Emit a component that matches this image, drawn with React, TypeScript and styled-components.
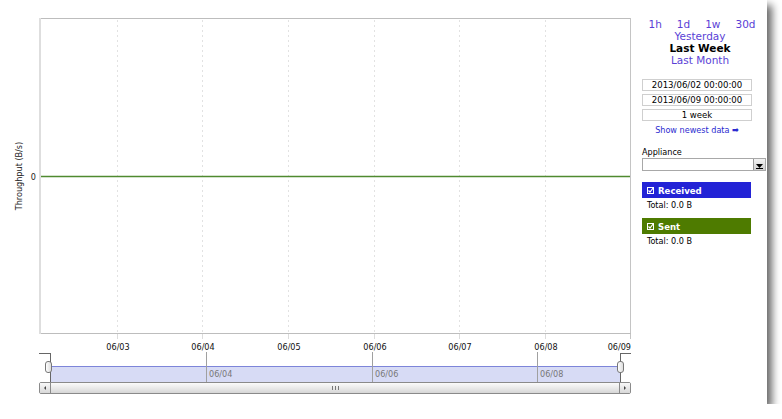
import React from 'react';
import styled, { createGlobalStyle } from 'styled-components';

const GlobalStyle = createGlobalStyle`
	html, body {
		margin: 0;
		padding: 0;
		background: #ffffff;
	}
	body {
		font-family: 'DejaVu Sans Condensed', 'DejaVu Sans', Verdana, sans-serif;
		color: #000;
	}
`;

const Frame = styled.div`
	display: flex;
	width: 767px;
	height: 404px;
	background: #fff;
	box-shadow: 5px 5px 8px rgba(0, 0, 0, 0.6);
`;

const ChartColumn = styled.div`
	display: flex;
	flex-direction: column;
	width: 636px;
`;

const PlotSvg = styled.svg`
	display: block;
	font-family: 'DejaVu Sans Condensed', 'DejaVu Sans', sans-serif;
`;

const Navigator = styled.div`
	display: flex;
	margin: 0 0 0 39px;
	width: 592px;
	height: 30px;
	position: relative;
`;

const Mask = styled.div<{ $side: 'left' | 'right' }>`
	width: ${(p) => (p.$side === 'left' ? 12 : 11)}px;
	box-sizing: border-box;
	margin-top: 1px;
	border-top: 1px solid #666;
	${(p) => (p.$side === 'left' ? 'border-right: 1px solid #666;' : 'border-left: 1px solid #666;')}
`;

const Range = styled.div`
	flex: 1;
	display: flex;
	flex-direction: column;
	justify-content: flex-end;
	position: relative;
`;

const Band = styled.div`
	height: 16px;
	box-sizing: border-box;
	background: #d7dbf5;
	border-top: 1px solid #7d85d9;
`;

const NavTick = styled.div`
	position: absolute;
	top: 0;
	bottom: 0;
	border-left: 1px solid #a0a0a0;
	font-size: 9px;
	color: #777;
	padding: 17px 0 0 2px;
	box-sizing: border-box;
`;

const Handle = styled.div<{ $x: number }>`
	position: absolute;
	left: ${(p) => p.$x}px;
	top: 9px;
	width: 5px;
	height: 10px;
	border: 1px solid #777;
	border-radius: 3px;
	background: linear-gradient(90deg, #fff, #ddd);
`;

const Scrollbar = styled.div`
	display: flex;
	margin-left: 39px;
	width: 592px;
	height: 12px;
	box-sizing: border-box;
	border: 1px solid #8a8a8a;
	border-radius: 2px;
	background: #eee;
`;

const ScrollButton = styled.div`
	width: 11px;
	display: flex;
	align-items: center;
	justify-content: center;
	background: linear-gradient(#f8f8f8, #d8d8d8);
	box-sizing: border-box;
	&:first-child {
		border-right: 1px solid #8a8a8a;
	}
	&:last-child {
		border-left: 1px solid #8a8a8a;
	}
`;

const Track = styled.div`
	flex: 1;
	display: flex;
	align-items: center;
	justify-content: center;
	background: linear-gradient(#fbfbfb, #e6e6e6 60%, #d6d6d6);
`;

const Grip = styled.div`
	width: 5px;
	height: 4px;
	border-left: 1px solid #777;
	border-right: 1px solid #777;
	position: relative;
	&::after {
		content: '';
		position: absolute;
		left: 2px;
		top: 0;
		height: 4px;
		border-left: 1px solid #777;
	}
`;

const Arrow = styled.div<{ $dir: 'left' | 'right' }>`
	width: 0;
	height: 0;
	border-top: 2px solid transparent;
	border-bottom: 2px solid transparent;
	${(p) => (p.$dir === 'left' ? 'border-right: 2px solid #444;' : 'border-left: 2px solid #444;')}
`;

const Side = styled.div`
	display: flex;
	flex-direction: column;
	width: 124px;
	padding: 18px 0 0 6px;
`;

const Presets = styled.div`
	width: 116px;
	display: flex;
	flex-direction: column;
	align-items: center;
	font-family: 'DejaVu Sans', Verdana, sans-serif;
	font-size: 10.5px;
	line-height: 12px;
	color: #5a3fd6;
`;

const PresetRow = styled.div`
	display: flex;
	gap: 15px;
	margin-left: 4px;
`;

const Preset = styled.span<{ $active?: boolean }>`
	color: ${(p) => (p.$active ? '#000' : '#5a3fd6')};
	font-weight: ${(p) => (p.$active ? 'bold' : 'normal')};
`;

const DateBox = styled.div<{ $first?: boolean }>`
	width: 110px;
	height: 12px;
	box-sizing: border-box;
	border: 1px solid #cfcfcf;
	font-size: 9.5px;
	line-height: 10px;
	text-align: center;
	margin-top: ${(p) => (p.$first ? 13 : 3)}px;
`;

const NewestLink = styled.div`
	width: 110px;
	text-align: center;
	margin-top: 3px;
	font-size: 9px;
	line-height: 12px;
	color: #2b2bd0;
`;

const FieldLabel = styled.div`
	margin-top: 11px;
	font-size: 9px;
	line-height: 10px;
`;

const Select = styled.div`
	display: flex;
	justify-content: flex-end;
	width: 124px;
	height: 13px;
	box-sizing: border-box;
	border: 1px solid #a8a8a8;
	margin-top: 1px;
`;

const SelectButton = styled.div`
	width: 12px;
	display: flex;
	align-items: flex-end;
	justify-content: center;
	padding-bottom: 1px;
	box-sizing: border-box;
	border-left: 1px solid #999;
	background: linear-gradient(#f4f4f4, #cfcfcf);
`;

const SeriesBar = styled.div<{ $color: string; $gap: number }>`
	display: flex;
	align-items: center;
	gap: 4px;
	width: 109px;
	height: 16px;
	box-sizing: border-box;
	padding-left: 5px;
	background: ${(p) => p.$color};
	color: #fff;
	font-size: 9.5px;
	font-weight: bold;
	margin-top: ${(p) => p.$gap}px;
`;

const Total = styled.div`
	padding-left: 5px;
	margin-top: 2px;
	font-size: 9px;
	line-height: 11px;
`;

const ticks = [
	{ x: 117, label: '06/03' },
	{ x: 202, label: '06/04' },
	{ x: 288, label: '06/05' },
	{ x: 374, label: '06/06' },
	{ x: 459, label: '06/07' },
	{ x: 545, label: '06/08' },
];

const navTicks = [
	{ x: 155, label: '06/04' },
	{ x: 321, label: '06/06' },
	{ x: 486, label: '06/08' },
];

const CheckIcon = () => (
	<svg width='7' height='7' viewBox='0 0 7 7'>
		<rect x='0.5' y='0.5' width='6' height='6' fill='none' stroke='#fff' strokeWidth='1' />
		<path d='M1.5 3.5 L3 5 L6.5 0.5' fill='none' stroke='#fff' strokeWidth='1.2' />
	</svg>
);

const Plot = () => (
	<PlotSvg width='636' height='352' viewBox='0 0 636 352'>
		{ticks.map((t) => (
			<g key={t.x}>
				<line x1={t.x + 0.5} y1='20' x2={t.x + 0.5} y2='333' stroke='#e2e2e2' strokeDasharray='2 3' />
				<line x1={t.x + 0.5} y1='334' x2={t.x + 0.5} y2='339' stroke='#dcdcdc' />
				<text x={t.x + 1} y='350' fontSize='9' textAnchor='middle' fill='#111'>
					{t.label}
				</text>
			</g>
		))}
		<text x='631' y='350' fontSize='9' textAnchor='end' fill='#111'>
			06/09
		</text>
		<line x1='40' y1='18.5' x2='631' y2='18.5' stroke='#bdbdbd' />
		<line x1='630.5' y1='18' x2='630.5' y2='339' stroke='#c4c4c4' />
		<line x1='40' y1='333.5' x2='631' y2='333.5' stroke='#bdbdbd' />
		<line x1='40' y1='18' x2='40' y2='334' stroke='#dedede' strokeWidth='2' />
		<line x1='41' y1='176.5' x2='630' y2='176.5' stroke='#4f8a30' strokeWidth='1.6' />
		<text x='36' y='180' fontSize='9' textAnchor='end' fill='#222'>
			0
		</text>
		<text x='22' y='176' fontSize='9' textAnchor='middle' fill='#222' transform='rotate(-90 22 176)'>
			Throughput (B/s)
		</text>
	</PlotSvg>
);

export default function App() {
	return (
		<>
			<GlobalStyle />
			<Frame>
				<ChartColumn>
					<Plot />
					<Navigator>
						<Mask $side='left' />
						<Range>
							<Band />
							{navTicks.map((t) => (
								<NavTick key={t.x} style={{ left: t.x }}>
									{t.label}
								</NavTick>
							))}
						</Range>
						<Mask $side='right' />
						<Handle $x={6} />
						<Handle $x={578} />
					</Navigator>
					<Scrollbar>
						<ScrollButton>
							<Arrow $dir='left' />
						</ScrollButton>
						<Track>
							<Grip />
						</Track>
						<ScrollButton>
							<Arrow $dir='right' />
						</ScrollButton>
					</Scrollbar>
				</ChartColumn>
				<Side>
					<Presets>
						<PresetRow>
							<Preset>1h</Preset>
							<Preset>1d</Preset>
							<Preset>1w</Preset>
							<Preset>30d</Preset>
						</PresetRow>
						<Preset>Yesterday</Preset>
						<Preset $active>Last Week</Preset>
						<Preset>Last Month</Preset>
					</Presets>
					<DateBox $first>2013/06/02 00:00:00</DateBox>
					<DateBox>2013/06/09 00:00:00</DateBox>
					<DateBox>1 week</DateBox>
					<NewestLink>Show newest data ➡</NewestLink>
					<FieldLabel>Appliance</FieldLabel>
					<Select>
						<SelectButton>
							<svg width='7' height='6' viewBox='0 0 7 6'>
								<path d='M0 1 H7 L3.5 5 Z' fill='#000' />
								<rect x='0' y='5' width='7' height='1' fill='#000' />
							</svg>
						</SelectButton>
					</Select>
					<SeriesBar $color='#2323d6' $gap={11}>
						<CheckIcon />
						Received
					</SeriesBar>
					<Total>Total: 0.0 B</Total>
					<SeriesBar $color='#4e7b00' $gap={7}>
						<CheckIcon />
						Sent
					</SeriesBar>
					<Total>Total: 0.0 B</Total>
				</Side>
			</Frame>
		</>
	);
}
